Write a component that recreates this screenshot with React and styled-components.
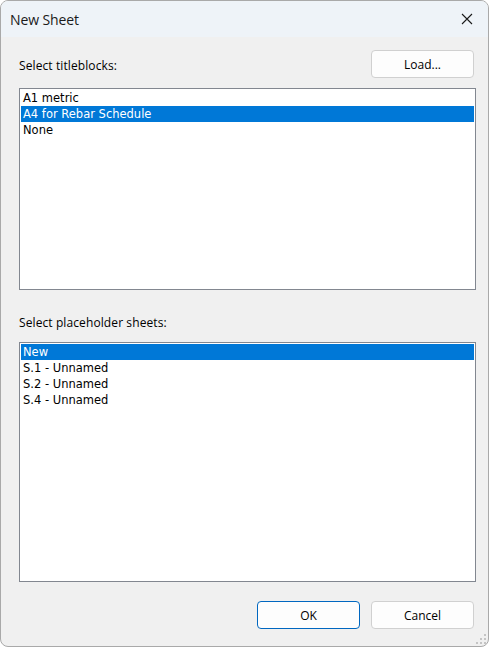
import React from 'react';
import styled, { createGlobalStyle } from 'styled-components';

const GlobalStyle = createGlobalStyle`
  html, body {
    margin: 0;
    padding: 0;
    background: #ffffff;
  }
  body {
    font-family: "Segoe UI", "Noto Sans", "Open Sans", sans-serif;
  }
`;

const Window = styled.div`
  box-sizing: border-box;
  width: 489px;
  height: 647px;
  border: 1px solid #a9a9a9;
  border-radius: 8px;
  overflow: hidden;
  background-color: #f0f0f0;
  display: flex;
  flex-direction: column;
  position: relative;
`;

const TitleBar = styled.header`
  height: 36px;
  background-color: #eef3f8;
  display: flex;
  flex-direction: row;
  justify-content: space-between;
  align-items: center;
  padding-left: 9px;
  padding-right: 14px;
  flex-shrink: 0;
`;

const Title = styled.h1`
  margin: 0;
  font-size: 14px;
  font-weight: 400;
  color: #1a1a1a;
  font-family: "Open Sans", "Noto Sans", sans-serif;
  letter-spacing: -0.1px;
`;

const CloseButton = styled.button`
  border: 0;
  background: none;
  padding: 0;
  width: 14px;
  height: 14px;
  display: flex;
  align-items: center;
  justify-content: center;
`;

const Content = styled.div`
  flex: 1;
  display: flex;
  flex-direction: column;
  padding-top: 13px;
  padding-left: 18px;
  padding-right: 12px;
`;

const HeaderRow = styled.div`
  display: flex;
  flex-direction: row;
  justify-content: space-between;
  align-items: center;
  padding-right: 2px;
  margin-bottom: 10px;
`;

const Label = styled.div`
  font-size: 12px;
  color: #000;
  font-family: "Open Sans", "Noto Sans", sans-serif;
  letter-spacing: 0.1px;
  line-height: 16px;
  padding-top: ${(p) => p.$top || 0}px;
  margin-bottom: ${(p) => p.$bottom || 0}px;
`;

const Button = styled.button`
  box-sizing: border-box;
  width: 103px;
  height: 28px;
  border-radius: 4px;
  border: 1px solid ${(p) => (p.$primary ? '#0067c0' : '#d0d0d0')};
  background-color: #fdfdfd;
  font-family: "Open Sans", "Noto Sans", sans-serif;
  font-size: 12px;
  color: #000;
  padding: 0;
  display: flex;
  justify-content: center;
  align-items: center;
`;

const ListBox = styled.div`
  box-sizing: border-box;
  height: ${(p) => p.$height}px;
  border: 1px solid #828790;
  background-color: #fff;
  padding: 1px;
`;

const Item = styled.div`
  height: 16px;
  line-height: 17px;
  padding-left: 2px;
  font-family: "DejaVu Sans", Tahoma, sans-serif;
  font-size: 11.5px;
  background-color: ${(p) => (p.$selected ? '#0078d7' : 'transparent')};
  color: ${(p) => (p.$selected ? '#fff' : '#000')};
  white-space: nowrap;
`;

const Footer = styled.div`
  display: flex;
  flex-direction: row;
  justify-content: flex-end;
  gap: 11px;
  padding-top: 19px;
  padding-right: 2px;
`;

const Grip = styled.svg`
  position: absolute;
  right: 1px;
  bottom: 1px;
`;

const titleblocks = ['A1 metric', 'A4 for Rebar Schedule', 'None'];
const sheets = ['New', 'S.1 - Unnamed', 'S.2 - Unnamed', 'S.4 - Unnamed'];

export default function App() {
  return (
    <>
      <GlobalStyle />
      <Window>
        <TitleBar>
          <Title>New Sheet</Title>
          <CloseButton aria-label="Close">
            <svg width="12" height="12" viewBox="0 0 12 12">
              <path d="M1 1 L11 11 M11 1 L1 11" stroke="#1a1a1a" strokeWidth="1.1" fill="none" />
            </svg>
          </CloseButton>
        </TitleBar>
        <Content>
          <HeaderRow>
            <Label $top={3}>Select titleblocks:</Label>
            <Button>Load...</Button>
          </HeaderRow>
          <ListBox $height={202}>
            {titleblocks.map((t, i) => (
              <Item key={t} $selected={i === 1}>{t}</Item>
            ))}
          </ListBox>
          <Label $top={25} $bottom={11}>Select placeholder sheets:</Label>
          <ListBox $height={240}>
            {sheets.map((t, i) => (
              <Item key={t} $selected={i === 0}>{t}</Item>
            ))}
          </ListBox>
          <Footer>
            <Button $primary>OK</Button>
            <Button>Cancel</Button>
          </Footer>
        </Content>
        <Grip width="11" height="11" viewBox="0 0 11 11">
          <g fill="#c4c4c4">
            <rect x="8" y="0" width="2" height="2" />
            <rect x="4" y="4" width="2" height="2" />
            <rect x="8" y="4" width="2" height="2" />
            <rect x="0" y="8" width="2" height="2" />
            <rect x="4" y="8" width="2" height="2" />
            <rect x="8" y="8" width="2" height="2" />
          </g>
        </Grip>
      </Window>
    </>
  );
}
